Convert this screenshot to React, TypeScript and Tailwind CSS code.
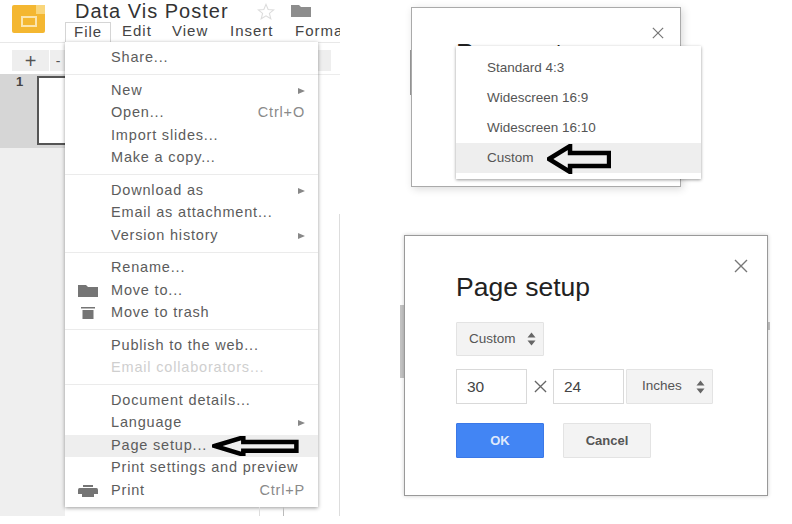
import React from "react";

const font = { fontFamily: '"Liberation Sans", Arial, sans-serif' };

function Arrow({ w, h, className }: { w: number; h: number; className?: string }) {
  return (
    <svg width={w} height={h} viewBox="0 0 100 30" preserveAspectRatio="none" className={className}>
      <path d="M3 15 L36 2 L36 9 L97 9 L97 22 L36 22 L36 28 Z" fill="none" stroke="#000" strokeWidth="4.5" strokeLinejoin="miter" vectorEffect="non-scaling-stroke" />
    </svg>
  );
}

function XIcon({ size, color = "#777" }: { size: number; color?: string }) {
  return (
    <svg width={size} height={size} viewBox="0 0 14 14">
      <path d="M1 1 L13 13 M13 1 L1 13" stroke={color} strokeWidth="1.4" fill="none" />
    </svg>
  );
}

function Updown() {
  return (
    <svg width="9" height="14" viewBox="0 0 9 14">
      <path d="M4.5 0.5 L8.5 5.5 H0.5 Z M4.5 13.5 L0.5 8.5 H8.5 Z" fill="#666" />
    </svg>
  );
}

function Tri() {
  return <span className="w-0 h-0 border-y-[3px] border-y-transparent border-l-[7px] border-l-[#888]" />;
}

function Item({
  label, right, arrow, icon, hi, off, children,
}: {
  label: string; right?: string; arrow?: boolean; icon?: React.ReactNode; hi?: boolean; off?: boolean; children?: React.ReactNode;
}) {
  return (
    <div className={`h-[22.5px] flex items-center pl-[46px] pr-[13px] relative text-[14.5px] tracking-[0.82px] ${hi ? "bg-[#eeeeee]" : ""} ${off ? "text-[#cfcfcf]" : "text-[#5c5c5c]"}`}>
      {icon && <span className="absolute left-[13px] top-0 h-full flex items-center">{icon}</span>}
      <span className="whitespace-nowrap">{label}</span>
      {children}
      <span className="ml-auto flex items-center text-[#8a8a8a]">
        {right}
        {arrow && <Tri />}
      </span>
    </div>
  );
}

const Sep = () => <div className="h-px bg-[#ebebeb] my-[4.5px]" />;

function FolderIcon({ w = 20, h = 12, c = "#757575" }: { w?: number; h?: number; c?: string }) {
  return (
    <svg width={w} height={h} viewBox="0 0 20 12">
      <path d="M0 0 H8 L10 2 H20 V12 H0 Z" fill={c} />
    </svg>
  );
}

function Menu() {
  return (
    <div className="absolute left-[65px] top-[42px] w-[253px] h-[465px] bg-white shadow-[0_1px_4px_rgba(0,0,0,0.4)] pt-[5px]">
      <Item label="Share..." />
      <Sep />
      <Item label="New" arrow />
      <Item label="Open..." right="Ctrl+O" />
      <Item label="Import slides..." />
      <Item label="Make a copy..." />
      <Sep />
      <Item label="Download as" arrow />
      <Item label="Email as attachment..." />
      <Item label="Version history" arrow />
      <Sep />
      <Item label="Rename..." />
      <Item label="Move to..." icon={<FolderIcon />} />
      <Item
        label="Move to trash"
        icon={
          <svg width="20" height="12" viewBox="0 0 20 12">
            <path d="M3 0 H17 V1.6 H3 Z M4.5 3 H15.5 V12 H4.5 Z" fill="#757575" />
          </svg>
        }
      />
      <Sep />
      <Item label="Publish to the web..." />
      <Item label="Email collaborators..." off />
      <Sep />
      <Item label="Document details..." />
      <Item label="Language" arrow />
      <Item label="Page setup..." hi>
        <Arrow w={87} h={20} className="absolute left-[147px] top-[1px]" />
      </Item>
      <Item label="Print settings and preview" />
      <Item
        label="Print"
        right="Ctrl+P"
        icon={
          <svg width="20" height="12" viewBox="0 0 20 12">
            <path d="M5 0 H15 V2 H5 Z M1.5 3 H18.5 Q20 3 20 5 V9 H16 V12 H4 V9 H0 V5 Q0 3 1.5 3 Z" fill="#757575" />
          </svg>
        }
      />
    </div>
  );
}

function LeftPanel() {
  return (
    <div className="absolute left-0 top-0 w-[340px] h-[516px] flex flex-col overflow-visible" style={font}>
      <div className="h-[43px] flex border-b border-[#e8e8e8] shrink-0">
        <div className="pl-[12px] pt-[5px] w-[75px] shrink-0">
          <div className="relative w-[33px] h-[28px] rounded-[2px] bg-[#f4b731] flex items-center justify-center">
            <span className="absolute right-0 top-0 w-[9px] h-[9px] bg-[#f9d67c]" />
            <span className="w-[16px] h-[11px] border-2 border-[#fbe5ae] mt-[4px]" />
          </div>
        </div>
        <div className="flex flex-col">
          <div className="flex items-center h-[22px] text-[20px] tracking-[1px] text-[#333] whitespace-nowrap">
            Data Vis Poster
            <svg width="18" height="17" viewBox="0 0 20 19" className="ml-[28px]">
              <path d="M10 1.5 L12.4 7.3 L18.6 7.7 L13.8 11.6 L15.4 17.6 L10 14.3 L4.6 17.6 L6.2 11.6 L1.4 7.7 L7.6 7.3 Z" fill="none" stroke="#dcdcdc" strokeWidth="1.2" />
            </svg>
            <span className="ml-[16px]"><FolderIcon w={20} h={12} c="#8d8d8d" /></span>
          </div>
          <div className="flex text-[15px] leading-[18px] tracking-[1px] text-[#444] w-[275px] overflow-hidden whitespace-nowrap -ml-[10px]">
            <span className="w-[46px] h-[21px] mr-[11px] pl-[8px] shrink-0 border border-b-0 border-[#d5d5d5] bg-white">File</span>
            <span className="w-[50px] shrink-0">Edit</span>
            <span className="w-[58px] shrink-0">View</span>
            <span className="w-[65px] shrink-0">Insert</span>
            <span className="shrink-0">Format</span>
          </div>
        </div>
      </div>
      <div className="h-[31px] shrink-0 flex items-center pl-[12px] pt-[4px] pr-[9px]">
        <div className="h-[21px] w-[37px] bg-[#eeeeee] flex items-center justify-center text-[20px] text-[#555] leading-none">+</div>
        <div className="h-[21px] w-[16px] ml-px bg-[#eeeeee] flex items-center justify-center text-[#555] text-[14px] leading-none">-</div>
        <div className="h-[21px] w-[13px] ml-auto bg-[#eeeeee]" />
      </div>
      <div className="flex-1 flex">
        <div className="w-[65px] flex flex-col bg-[#efefef]">
          <div className="h-[74px] bg-[#d6d6d6] flex pl-[16px] pt-[1px] text-[13px] font-bold text-[#444] relative">
            <span className="leading-[12px] mt-[1px]">1</span>
            <span className="absolute left-[37px] top-[2px] w-[28px] h-[69px] bg-white border-2 border-r-0 border-[#555]" />
          </div>
        </div>
        <div className="flex-1 flex flex-col items-end">
          <div className="w-full h-[74px] border-t border-[#ececec]" />
          <div className="w-px flex-1 mt-[66px] bg-[#dddddd]" />
        </div>
      </div>
      <Menu />
      <span className="absolute left-[259px] top-[507px] w-px h-[9px] bg-[#dddddd]" />
      <span className="absolute left-[283px] top-[507px] w-px h-[9px] bg-[#bbbbbb]" />
    </div>
  );
}

function DropRow({ label, hi, children }: { label: string; hi?: boolean; children?: React.ReactNode }) {
  return (
    <div className={`h-[30px] flex items-center pl-[31px] text-[13.5px] text-[#555] relative ${hi ? "bg-[#eeeeee]" : ""}`}>
      <span className="whitespace-nowrap">{label}</span>
      {children}
    </div>
  );
}

function TopDialog() {
  return (
    <div className="absolute left-[411px] top-[7px] w-[270px] h-[180px] bg-white border border-[#aaaaaa] shadow-[2px_2px_8px_rgba(0,0,0,0.15)]" style={font}>
      <span className="absolute left-[240px] top-[19px]"><XIcon size={12} /></span>
      <div className="absolute left-[44px] top-[30px] h-[8px] overflow-hidden text-[27px] leading-[32px] text-[#222] whitespace-nowrap">Page setup</div>
      <div className="absolute left-[44px] top-[38px] w-[245px] h-[133px] bg-white shadow-[0_1px_3px_rgba(0,0,0,0.4)] pt-[7px]">
        <DropRow label="Standard 4:3" />
        <DropRow label="Widescreen 16:9" />
        <DropRow label="Widescreen 16:10" />
        <DropRow label="Custom" hi>
          <Arrow w={64} h={30} className="absolute left-[91px] top-[1px]" />
        </DropRow>
      </div>
    </div>
  );
}

function Select({ label, className }: { label: string; className: string }) {
  return (
    <div className={`bg-[#f3f3f3] border border-[#e3e3e3] rounded-[1px] flex items-center justify-between text-[13.5px] text-[#555] ${className}`}>
      <span>{label}</span>
      <Updown />
    </div>
  );
}

function Field({ value }: { value: string }) {
  return (
    <div className="w-[71px] h-[35px] border border-[#d9d9d9] bg-white flex items-center pl-[10px] text-[15.5px] text-[#444]">
      {value}
    </div>
  );
}

function BottomDialog() {
  return (
    <div className="absolute left-[404px] top-[235px] w-[364px] h-[261px] bg-white border border-[#999999] shadow-[0_0_4px_rgba(0,0,0,0.2)] pl-[51px] pt-[35px]" style={font}>
      <span className="absolute left-[329px] top-[23px]"><XIcon size={14} /></span>
      <div className="text-[26.5px] leading-[32px] text-[#222] whitespace-nowrap">Page setup</div>
      <Select label="Custom" className="h-[34px] w-[88px] mt-[19px] pl-[12px] pr-[7px]" />
      <div className="flex items-center mt-[13px]">
        <Field value="30" />
        <span className="w-[26px] flex justify-center"><XIcon size={13} color="#666" /></span>
        <Field value="24" />
        <Select label="Inches" className="w-[87px] h-[35px] ml-[2px] pl-[15px] pr-[7px]" />
      </div>
      <div className="flex gap-[19px] mt-[19px]">
        <div className="w-[88px] h-[35px] rounded-[1px] bg-[#4285f4] border border-[#3b78e7] flex items-center justify-center text-[13px] font-bold text-[#dfe9fb]">OK</div>
        <div className="w-[88px] h-[35px] rounded-[1px] bg-[#f3f3f3] border border-[#e3e3e3] flex items-center justify-center text-[13px] font-bold text-[#555]">Cancel</div>
      </div>
    </div>
  );
}

export default function App() {
  return (
    <div className="relative w-[792px] h-[524px] bg-white overflow-hidden">
      <LeftPanel />
      <span className="absolute left-[400px] top-[305px] w-[4px] h-[73px] bg-[#c4c4c4]" />
      <span className="absolute left-[768px] top-[322px] w-[2px] h-[8px] bg-[#c4c4c4]" />
      <span className="absolute left-[410px] top-[50px] w-px h-[45px] bg-[#999999]" />
      <TopDialog />
      <BottomDialog />
    </div>
  );
}
